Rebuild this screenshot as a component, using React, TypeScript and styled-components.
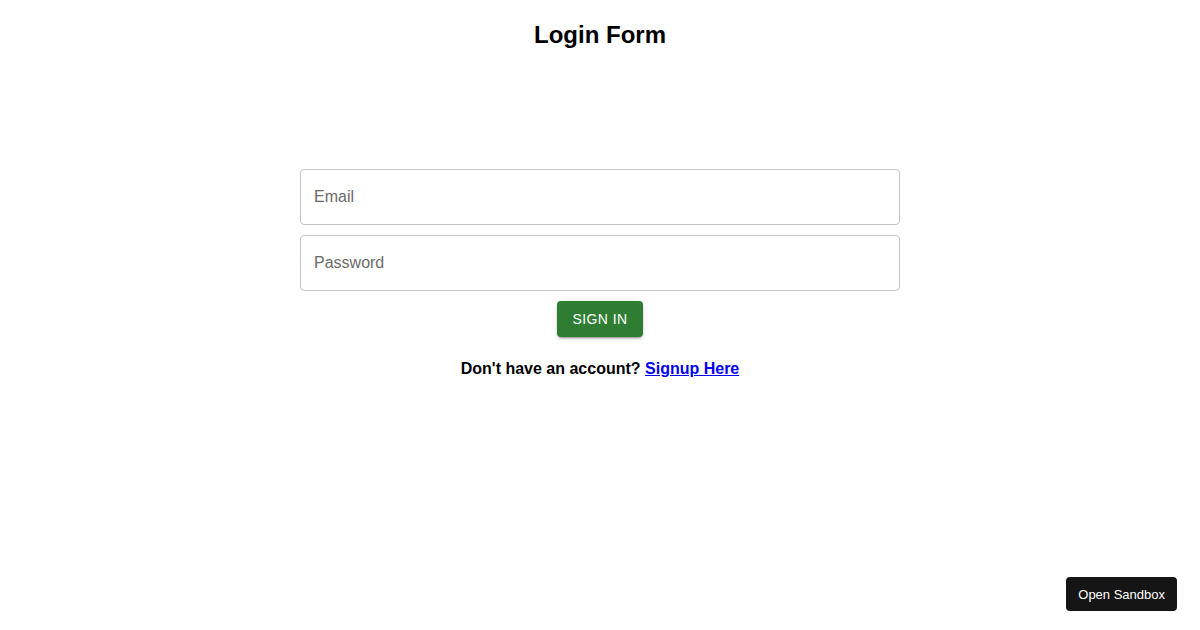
import React from 'react';
import styled, { createGlobalStyle } from 'styled-components';

const GlobalStyle = createGlobalStyle`
  html, body {
    margin: 0;
    padding: 0;
    background: #fff;
    font-family: "Liberation Sans", Arial, sans-serif;
  }
`;

const Page = styled.div`
  position: relative;
  width: 1200px;
  height: 630px;
  display: flex;
  flex-direction: column;
  align-items: center;
`;

const Title = styled.h1`
  margin: 21px 0 0;
  font-size: 24px;
  line-height: 28px;
  font-weight: 700;
  color: #000;
`;

const Form = styled.form`
  width: 600px;
  margin-top: 120px;
  display: flex;
  flex-direction: column;
  align-items: center;
  gap: 10px;
`;

const Field = styled.input`
  box-sizing: border-box;
  width: 100%;
  height: 56px;
  padding: 0 13px;
  border: 1px solid #c4c4c4;
  border-radius: 4px;
  font-family: "Liberation Sans", Arial, sans-serif;
  font-size: 16px;
  color: #222;
  outline: none;
  &::placeholder {
    color: #6b6b6b;
    opacity: 1;
  }
`;

const SubmitButton = styled.button`
  height: 36px;
  padding: 0 16px;
  border: none;
  border-radius: 4px;
  background: #2e7d32;
  color: #fff;
  font-family: "Liberation Sans", Arial, sans-serif;
  font-size: 14px;
  font-weight: 500;
  letter-spacing: 0.4px;
  text-transform: uppercase;
  box-shadow: 0px 3px 1px -2px rgba(0, 0, 0, 0.2), 0px 2px 2px 0px rgba(0, 0, 0, 0.14),
    0px 1px 5px 0px rgba(0, 0, 0, 0.12);
  cursor: pointer;
`;

const Footer = styled.p`
  margin: 23px 0 0;
  font-size: 16px;
  line-height: 18px;
  font-weight: 700;
  color: #000;
  a {
    color: #0000ee;
    text-decoration: underline;
  }
`;

const SandboxButton = styled.a`
  position: absolute;
  right: 23px;
  bottom: 19px;
  box-sizing: border-box;
  height: 34px;
  padding: 0 12px;
  display: flex;
  align-items: center;
  background: #151515;
  color: #fff;
  border-radius: 4px;
  font-family: "Liberation Sans", Arial, sans-serif;
  font-size: 13px;
  text-decoration: none;
`;

export default function App() {
  return (
    <Page>
      <GlobalStyle />
      <Title>Login Form</Title>
      <Form onSubmit={(e) => e.preventDefault()}>
        <Field type="email" placeholder="Email" />
        <Field type="password" placeholder="Password" />
        <SubmitButton type="submit">Sign In</SubmitButton>
      </Form>
      <Footer>
        Don't have an account? <a href="#">Signup Here</a>
      </Footer>
      <SandboxButton href="#">Open Sandbox</SandboxButton>
    </Page>
  );
}
